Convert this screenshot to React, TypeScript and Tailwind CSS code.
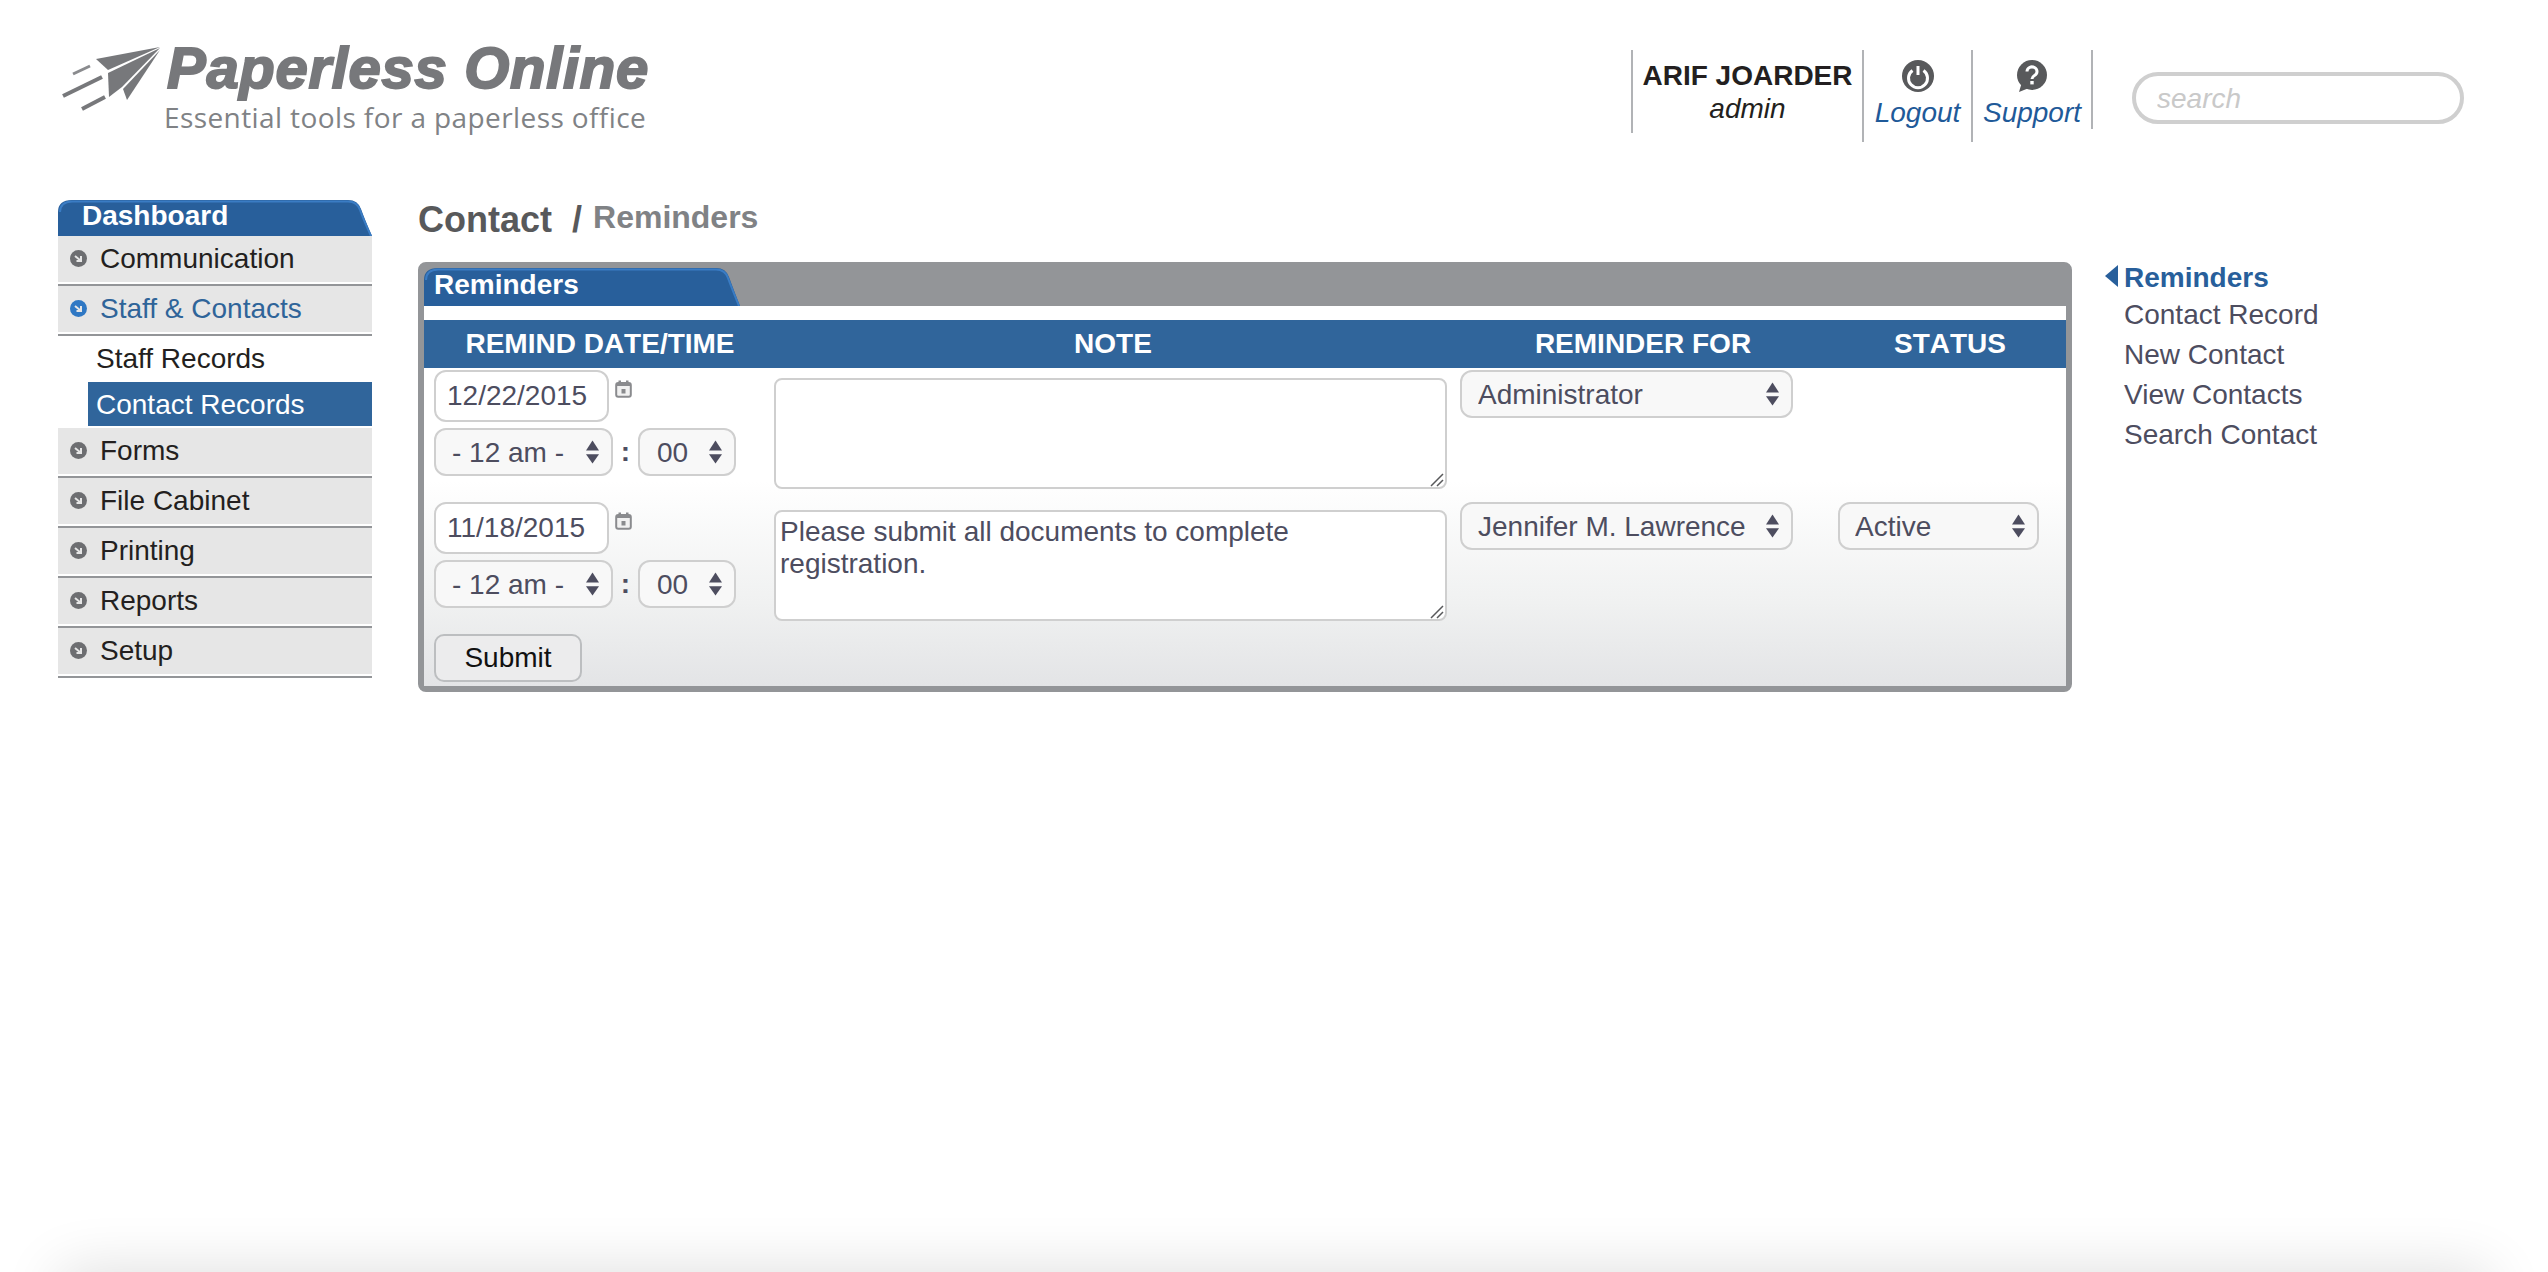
import type { ReactNode } from 'react'

const menuTop = [
  { label: 'Communication', active: false },
  { label: 'Staff & Contacts', active: true },
]
const menuBottom = ['Forms', 'File Cabinet', 'Printing', 'Reports', 'Setup']
const sideLinks = ['Contact Record', 'New Contact', 'View Contacts', 'Search Contact']

function Logo() {
  return (
    <div className="flex items-start">
      <svg width="105" height="70" viewBox="60 45 105 70" className="shrink-0">
        <polygon points="160,48 96,60 108,71" fill="#77787b" />
        <polygon points="160,49 108,74 109,98 122,88" fill="#77787b" />
        <polygon points="160,51 123,90 127,101" fill="#77787b" />
        <line x1="73" y1="75" x2="90" y2="67" stroke="#8a8b8e" strokeWidth="3" />
        <line x1="63" y1="97" x2="102" y2="78" stroke="#77787b" strokeWidth="4" />
        <line x1="82" y1="110" x2="105" y2="98" stroke="#77787b" strokeWidth="4" />
      </svg>
      <div className="-mt-[5px] ml-[2px] flex flex-col">
        <div className="h-[58px] text-[58px] leading-[58px] font-bold italic tracking-[0.7px] text-[#77787b] [-webkit-text-stroke:2px_#77787b]">
          Paperless Online
        </div>
        <div className="mt-[3px] -ml-[3px] font-['Open_Sans',sans-serif] text-[28px] leading-[34px] tracking-[0.4px] text-[#808285]">
          Essential tools for a paperless office
        </div>
      </div>
    </div>
  )
}

function UserBar() {
  return (
    <div className="flex items-start">
      <div className="h-[83px] w-[231px] border-l-2 border-[#b1b3b6] pt-[9px] text-center text-[28px] leading-[33px] text-[#231f20]">
        <div className="font-bold">ARIF JOARDER</div>
        <div className="italic">admin</div>
      </div>
      <div className="flex h-[92px] w-[109px] flex-col items-center border-l-2 border-[#b1b3b6] pt-[10px]">
        <svg width="32" height="32" viewBox="0 0 32 32">
          <circle cx="16" cy="16" r="16" fill="#58595b" />
          <path d="M10.5 10.5a9.5 9.5 0 1 0 11 0" fill="none" stroke="#fff" strokeWidth="3" />
          <line x1="16" y1="6" x2="16" y2="15" stroke="#fff" strokeWidth="3" />
        </svg>
        <a className="mt-[4px] text-[28px] leading-[34px] text-[#1f5a99] italic">Logout</a>
      </div>
      <div className="flex h-[92px] w-[120px] flex-col items-center border-l-2 border-[#b1b3b6] pt-[10px]">
        <svg width="32" height="32" viewBox="0 0 32 32">
          <circle cx="16" cy="15" r="15" fill="#58595b" />
          <polygon points="3,32 6,22 13,28" fill="#58595b" />
          <path d="M11 11.5a5 4.6 0 1 1 7.5 4c-1.8 1.1-2.5 1.8-2.5 3.5" fill="none" stroke="#fff" strokeWidth="3" />
          <rect x="14.3" y="21" width="3.4" height="3.4" fill="#fff" />
        </svg>
        <a className="mt-[4px] text-[28px] leading-[34px] text-[#1f5a99] italic">Support</a>
      </div>
      <div className="h-[79px] w-0 border-l-2 border-[#b1b3b6]" />
      <input
        placeholder="search"
        className="mt-[22px] ml-[39px] h-[52px] w-[332px] rounded-full border-4 border-[#cfcfcf] pt-[1px] pl-[21px] text-[28px] italic outline-none placeholder:text-[#c9c9c9]"
      />
    </div>
  )
}

function Tab({ width, height, slant, children }: { width: number; height: number; slant: number; children: ReactNode }) {
  const x = width - slant
  const d = `M0 ${height}V12Q0 0 14 0H${x - 4}Q${x + 6} 0 ${x + 9} 9Q${x + 13} 20 ${width} ${height}Z`
  return (
    <div className="relative" style={{ width, height }}>
      <svg width={width} height={height} className="absolute inset-0">
        <path d={d} fill="#285f9b" />
        <path
          d={`M2 12Q2 2 14 1.5H${x - 4}Q${x + 5} 1.5 ${x + 8} 10Q${x + 12} 21 ${width - 1} ${height}`}
          fill="none"
          stroke="#3a7cc4"
          strokeWidth="2"
        />
      </svg>
      <div className="relative text-[28px] leading-[32px] font-bold text-white">{children}</div>
    </div>
  )
}

function Bullet({ active }: { active?: boolean }) {
  const fill = active ? '#2f78c4' : '#6d6e71'
  return (
    <svg width="17" height="17" viewBox="0 0 17 17" className="mb-[1px] ml-[12px] shrink-0">
      <circle cx="8.5" cy="8.5" r="8.5" fill={fill} />
      <path d="M5 6l5.5 4.5M11 6v5H6.5" fill="none" stroke="#e6e6e6" strokeWidth="2" />
    </svg>
  )
}

function MenuRow({ label, active }: { label: string; active?: boolean }) {
  return (
    <div className="h-[50px] border-b-2 border-[#939598]">
      <div className="flex h-[46px] items-center bg-[#e6e6e6]">
        <Bullet active={active} />
        <span className={`ml-[13px] leading-[44px] ${active ? 'text-[#2f6499]' : 'text-[#231f20]'}`}>{label}</span>
      </div>
    </div>
  )
}

function Sidebar() {
  return (
    <aside className="w-[314px] shrink-0 text-[28px]">
      <Tab width={314} height={36} slant={20}>
        <div className="pl-[24px]">Dashboard</div>
      </Tab>
      {menuTop.map((m) => (
        <MenuRow key={m.label} label={m.label} active={m.active} />
      ))}
      <div className="h-[46px] pl-[38px] leading-[46px] text-[#231f20]">Staff Records</div>
      <div className="ml-[30px] h-[44px] bg-[#30659b] pl-[8px] leading-[46px] text-white">Contact Records</div>
      <div className="mt-[2px]">
        {menuBottom.map((m) => (
          <MenuRow key={m} label={m} />
        ))}
      </div>
    </aside>
  )
}

function Arrows() {
  return (
    <svg width="13" height="24" viewBox="0 0 14 25" className="pointer-events-none absolute top-1/2 right-[14px] -translate-y-1/2">
      <polygon points="7,0 14,11 0,11" fill="#4d4d5f" />
      <polygon points="0,15 14,15 7,25" fill="#4d4d5f" />
    </svg>
  )
}

function Select({ value, className, pad }: { value: string; className: string; pad: string }) {
  return (
    <div className={`relative h-[48px] ${className}`}>
      <select
        defaultValue={value}
        className={`h-full w-full appearance-none rounded-[12px] border-2 border-[#cfcfcf] bg-[#f8f8f8] pt-[2px] text-[28px] text-[#4d4d5f] outline-none ${pad}`}
      >
        <option>{value}</option>
      </select>
      <Arrows />
    </div>
  )
}

function CalendarIcon() {
  return (
    <svg width="17" height="18" viewBox="0 0 17 18" className="mt-[10px] ml-[6px]">
      <rect x="1.2" y="3" width="14.6" height="13.8" rx="2" fill="#f1f1f1" stroke="#8a8b8e" strokeWidth="2" />
      <rect x="1" y="3" width="15" height="3" fill="#8a8b8e" />
      <rect x="3.5" y="0.5" width="2.5" height="4" fill="#8a8b8e" />
      <rect x="11" y="0.5" width="2.5" height="4" fill="#8a8b8e" />
      <rect x="6.5" y="9" width="4" height="4.5" fill="#8a8b8e" />
    </svg>
  )
}

function ReminderRow({ date, note, person, status }: { date: string; note: string; person: string; status?: string }) {
  return (
    <div className="grid h-[132px] grid-cols-[350px_686px_379px_227px]">
      <div className="pt-[2px] pl-[10px]">
        <div className="flex items-start">
          <input
            defaultValue={date}
            className="h-[52px] w-[175px] rounded-[12px] border-2 border-[#cfcfcf] bg-white pl-[11px] text-[28px] text-[#4d4d5f] outline-none"
          />
          <CalendarIcon />
        </div>
        <div className="mt-[6px] flex items-center">
          <Select value="- 12 am -" className="w-[179px]" pad="pl-[16px]" />
          <div className="w-[25px] text-center text-[28px] font-bold text-[#4d4d5f]">:</div>
          <Select value="00" className="w-[98px]" pad="pl-[17px]" />
        </div>
      </div>
      <div className="relative pt-[10px]">
        <textarea
          defaultValue={note}
          className="block h-[111px] w-[673px] resize-none rounded-[8px] border-2 border-[#cfcfcf] bg-white px-[4px] py-[4px] text-[28px] leading-[32px] text-[#4d4d5f] outline-none"
        />
        {/* resize grip */}
        <svg width="14" height="14" viewBox="0 0 14 14" className="absolute top-[105px] left-[656px]">
          <path d="M1 13L13 1M7 13l6-6" fill="none" stroke="#58595b" strokeWidth="1.5" />
        </svg>
      </div>
      <div className="pt-[2px]">
        <Select value={person} className="w-[333px]" pad="pl-[16px]" />
      </div>
      <div className="-ml-[1px] pt-[2px]">{status && <Select value={status} className="w-[201px]" pad="pl-[15px]" />}</div>
    </div>
  )
}

function RemindersPanel() {
  return (
    <div className="h-[430px] w-[1654px] rounded-[8px] border-[6px] border-[#939598] text-[28px]">
      <div className="h-[38px] bg-[#939598]">
        <Tab width={316} height={38} slant={20}>
          <div className="pt-[1px] pl-[10px]">Reminders</div>
        </Tab>
      </div>
      <div className="h-[380px] bg-[linear-gradient(#fff_46%,#f0f1f1_78%,#e3e4e6_100%)] pt-[14px]">
        <div className="grid h-[48px] grid-cols-[352px_674px_386px_230px] bg-[#30659b] text-center leading-[48px] font-bold text-white [font-kerning:none]">
          <div>REMIND DATE/TIME</div>
          <div>NOTE</div>
          <div>REMINDER FOR</div>
          <div className="pr-[2px]">STATUS</div>
        </div>
        <ReminderRow date="12/22/2015" note="" person="Administrator" />
        <ReminderRow
          date="11/18/2015"
          note="Please submit all documents to complete registration."
          person="Jennifer M. Lawrence"
          status="Active"
        />
        <button className="mt-[2px] ml-[10px] h-[48px] w-[148px] rounded-[10px] border-2 border-[#bcbec0] bg-[#ececed] text-[28px] text-[#111]">
          Submit
        </button>
      </div>
    </div>
  )
}

function SideNav() {
  return (
    <nav className="ml-[33px] pt-[63px] text-[28px] text-[#4d4d5f]">
      <div className="flex h-[30px] items-center font-bold text-[#285f9b]">
        <svg width="13" height="22" viewBox="0 0 13 22" className="-mt-[4px] shrink-0">
          <polygon points="13,0 13,22 0,11" fill="#285f9b" />
        </svg>
        <span className="ml-[6px] leading-[30px]">Reminders</span>
      </div>
      <div className="mt-[2px]">
        {sideLinks.map((l) => (
          <div key={l} className="pl-[19px] leading-[40px]">
            {l}
          </div>
        ))}
      </div>
    </nav>
  )
}

export default function App() {
  return (
    <div className="relative h-[1272px] overflow-hidden bg-white font-['Liberation_Sans',Arial,sans-serif]">
      <header className="flex h-[200px] justify-between pt-[44px] pr-[84px] pl-[60px]">
        <Logo />
        <div className="mt-[6px]">
          <UserBar />
        </div>
      </header>

      <div className="flex pl-[58px]">
        <Sidebar />
        <main className="ml-[46px] w-[1654px]">
          <div className="flex h-[62px] items-start font-bold text-[#58595b]">
            <span className="text-[36px] leading-[40px]">Contact</span>
            <span className="ml-[20px] text-[36px] leading-[40px]">/</span>
            <span className="-mt-[1px] ml-[11px] text-[32px] leading-[36px] text-[#808285]">Reminders</span>
          </div>
          <RemindersPanel />
        </main>
        <SideNav />
      </div>

      {/* footer shadow peeking up from below the fold */}
      <div className="absolute top-[1272px] right-[60px] left-[60px] h-[60px] shadow-[0_0_60px_rgba(0,0,0,0.14)]" />
    </div>
  )
}
